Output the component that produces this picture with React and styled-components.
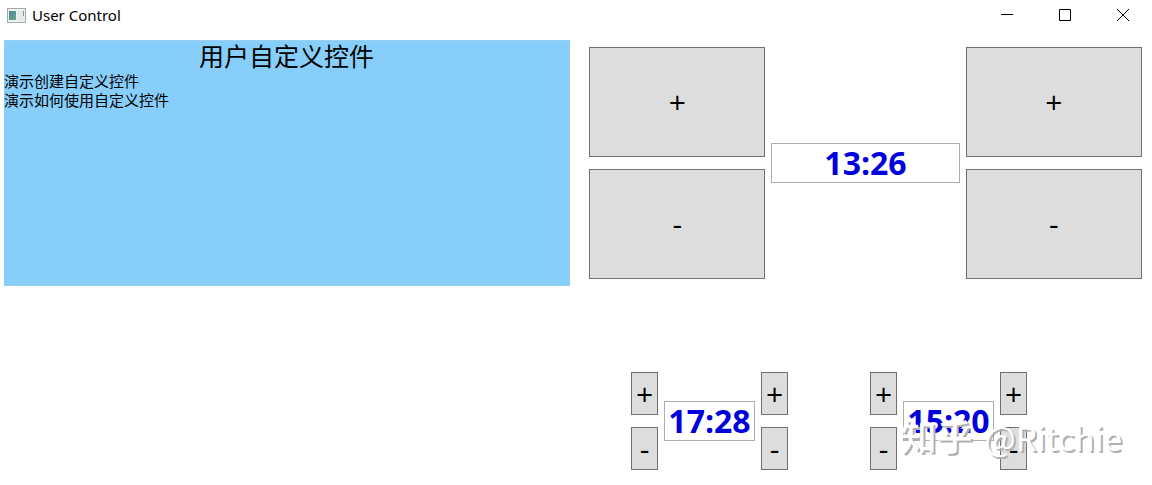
import React, { useState } from 'react'
import styled, { createGlobalStyle } from 'styled-components'

const GlobalStyle = createGlobalStyle`
body {
  margin: 0;
  background-color: white;
  color: black;
  font-family: "Open Sans", "Noto Sans CJK SC", sans-serif;
}

* {
  box-sizing: border-box;
}
`

const Window = styled.div`
position: relative;
min-height: 100vh;
`

const TitleBar = styled.header`
display: flex;
align-items: center;
height: 30px;
padding-left: 7px;
`

const AppIcon = styled.svg`
width: 19px;
height: 15px;
margin-right: 6px;
`

const WindowTitle = styled.h1`
flex: 1;
margin: 0;
font-family: "Noto Sans", "Open Sans", sans-serif;
font-size: 15px;
line-height: 30px;
font-weight: 400;
`

const WindowButton = styled.button`
display: flex;
align-items: center;
justify-content: center;
width: 58px;
height: 30px;
padding: 0;
border: none;
background: none;

:hover {
  background-color: rgb(229, 229, 229);
}
`

const Content = styled.main`
display: grid;
grid-template-columns: 566fr 553fr;
column-gap: 19px;
row-gap: 86px;
padding: 10px 10px 15px 4px;
`

const InfoPanel = styled.section`
background-color: rgb(135, 206, 250);
border: 1px solid rgb(151, 207, 240);
border-left: none;
`

const InfoTitle = styled.h2`
margin: 0;
font-size: 25px;
line-height: 31px;
font-weight: 400;
text-align: center;
`

const InfoText = styled.p`
margin: 0;
font-size: 15px;
line-height: 19px;
`

const LargeArea = styled.div`
padding: 7px 0;
`

const SmallArea = styled.div`
grid-column: 2;
display: flex;
gap: 82px;
padding-left: 42px;
`

const Picker = styled.div`
display: grid;
grid-template-columns: ${props => props.$small ? '27px 91px 27px' : '15fr 16fr 15fr'};
column-gap: 6px;
align-items: center;
`

const ButtonColumn = styled.div`
display: grid;
row-gap: 12px;
`

const StepButton = styled.button`
display: flex;
align-items: center;
justify-content: center;
height: ${props => props.$small ? '43px' : '110px'};
padding: 0;
border: 1px solid rgb(112, 112, 112);
background-color: rgb(221, 221, 221);
color: black;
font-family: "Open Sans", sans-serif;
font-size: 30px;
line-height: 40px;
`

const TimeBox = styled.input`
width: 100%;
min-width: 0;
height: 40px;
padding: 0 0 2px;
border: 1px solid rgb(171, 173, 179);
background-color: white;
color: rgb(0, 0, 221);
font-family: "Open Sans", sans-serif;
font-size: 32px;
font-weight: 700;
text-align: center;
`

const Watermark = styled.div`
position: absolute;
right: 30px;
bottom: 24px;
display: flex;
align-items: baseline;
gap: 12px;
color: white;
font-family: "Noto Sans CJK SC", sans-serif;
font-size: 33px;
line-height: 48px;
text-shadow: 2px 2px 0 rgb(176, 176, 176);
pointer-events: none;
`

const WatermarkSite = styled.span`
font-size: 36px;
font-weight: 500;
`

const pad = n => String(n).padStart(2, '0')

const TimePicker = ({ label, startHour, startMinute, small }) => {
  const [hour, setHour] = useState(startHour)
  const [minute, setMinute] = useState(startMinute)
  const addHour = step => setHour((hour + step + 24) % 24)
  const addMinute = step => setMinute((minute + step + 60) % 60)

  return (
    <Picker $small={small}>
      <ButtonColumn>
        <StepButton $small={small} aria-label={`${label} hour up`} onClick={() => addHour(1)}>+</StepButton>
        <StepButton $small={small} aria-label={`${label} hour down`} onClick={() => addHour(-1)}>-</StepButton>
      </ButtonColumn>
      <TimeBox type="text" readOnly aria-label={label} value={`${pad(hour)}:${pad(minute)}`} />
      <ButtonColumn>
        <StepButton $small={small} aria-label={`${label} minute up`} onClick={() => addMinute(1)}>+</StepButton>
        <StepButton $small={small} aria-label={`${label} minute down`} onClick={() => addMinute(-1)}>-</StepButton>
      </ButtonColumn>
    </Picker>
  )
}

export default function App() {
  return (
    <Window>
      <GlobalStyle />
      <TitleBar>
        <AppIcon viewBox="0 0 19 15" aria-hidden="true">
          <defs>
            <linearGradient id="pane" x1="0" y1="0" x2="1" y2="1">
              <stop offset="0" stopColor="#4f86a0" />
              <stop offset="1" stopColor="#5fa883" />
            </linearGradient>
          </defs>
          <rect x="0.5" y="0.5" width="18" height="14" fill="#f1f3f3" stroke="#a3a8aa" />
          <rect x="2" y="3" width="7" height="9" fill="url(#pane)" />
          <rect x="10" y="2" width="7" height="11" fill="#e6eaea" />
          <rect x="16" y="3" width="1" height="5" fill="#8b9396" />
        </AppIcon>
        <WindowTitle>User Control</WindowTitle>
        <WindowButton aria-label="Minimize">
          <svg width="12" height="12" viewBox="0 0 12 12"><path d="M0 5.5h12" stroke="black" /></svg>
        </WindowButton>
        <WindowButton aria-label="Maximize">
          <svg width="12" height="12" viewBox="0 0 12 12"><path d="M.5 .5h11v11h-11z" fill="none" stroke="black" /></svg>
        </WindowButton>
        <WindowButton aria-label="Close">
          <svg width="12" height="12" viewBox="0 0 12 12"><path d="M0 0l12 12M12 0L0 12" stroke="black" /></svg>
        </WindowButton>
      </TitleBar>
      <Content>
        <InfoPanel>
          <InfoTitle>用户自定义控件</InfoTitle>
          <InfoText>演示创建自定义控件</InfoText>
          <InfoText>演示如何使用自定义控件</InfoText>
        </InfoPanel>
        <LargeArea>
          <TimePicker label="Main time" startHour={13} startMinute={26} />
        </LargeArea>
        <SmallArea>
          <TimePicker small label="First time" startHour={17} startMinute={28} />
          <TimePicker small label="Second time" startHour={15} startMinute={20} />
        </SmallArea>
      </Content>
      <Watermark><WatermarkSite>知乎</WatermarkSite><span>@Ritchie</span></Watermark>
    </Window>
  )
}
